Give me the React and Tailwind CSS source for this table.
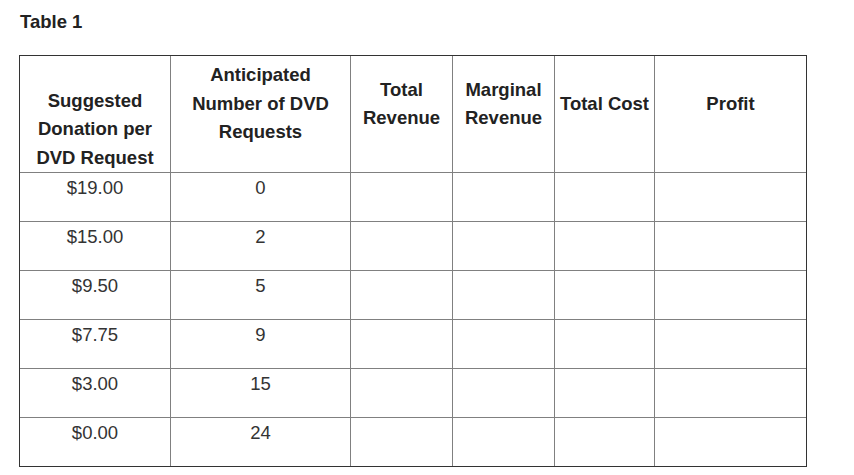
export default function App() {
  const rows = [
    ["$19.00", "0"],
    ["$15.00", "2"],
    ["$9.50", "5"],
    ["$7.75", "9"],
    ["$3.00", "15"],
    ["$0.00", "24"],
  ];
  const font = { fontFamily: '"Liberation Sans", Arial, sans-serif' };
  return (
    <div className="bg-white w-[854px] h-[475px] text-[#333] pl-[19px] pt-[8px]" style={font}>
      <div className="pl-[1px] text-[18.5px] font-bold leading-[28px] text-[#222]">Table 1</div>
      <div className="mt-[19px] w-[788px] border border-[#333] grid grid-cols-[151px_180px_102px_102px_100px_151px] text-[18.5px] leading-[28.5px]">
        <div className="h-[117px] border-r border-b border-[#808080] flex flex-col justify-end items-center text-center font-bold text-[#222] whitespace-nowrap">
          <span>Suggested</span>
          <span>Donation per</span>
          <span>DVD Request</span>
        </div>
        <div className="h-[117px] border-r border-b border-[#808080] flex flex-col justify-center items-center text-center font-bold text-[#222] pb-[20px] whitespace-nowrap">
          <span>Anticipated</span>
          <span>Number of DVD</span>
          <span>Requests</span>
        </div>
        <div className="h-[117px] border-r border-b border-[#808080] flex flex-col justify-center items-center text-center font-bold text-[#222] pb-[20px]">
          <span>Total</span>
          <span>Revenue</span>
        </div>
        <div className="h-[117px] border-r border-b border-[#808080] flex flex-col justify-center items-center text-center font-bold text-[#222] pb-[20px]">
          <span>Marginal</span>
          <span>Revenue</span>
        </div>
        <div className="h-[117px] border-r border-b border-[#808080] flex flex-col justify-center items-center text-center font-bold text-[#222] pb-[20px] whitespace-nowrap">
          <span>Total Cost</span>
        </div>
        <div className="h-[117px] border-b border-[#808080] flex flex-col justify-center items-center text-center font-bold text-[#222] pb-[20px]">
          <span>Profit</span>
        </div>
        {rows.map((r, i) => {
          const last = i === rows.length - 1;
          const b = last ? "h-[48px]" : "h-[49px] border-b";
          return [
            <div key={`a${i}`} className={`${b} border-r border-[#808080] text-center leading-[29px]`}>{r[0]}</div>,
            <div key={`b${i}`} className={`${b} border-r border-[#808080] text-center leading-[29px]`}>{r[1]}</div>,
            <div key={`c${i}`} className={`${b} border-r border-[#808080]`}></div>,
            <div key={`d${i}`} className={`${b} border-r border-[#808080]`}></div>,
            <div key={`e${i}`} className={`${b} border-r border-[#808080]`}></div>,
            <div key={`f${i}`} className={`${b} border-[#808080]`}></div>,
          ];
        })}
      </div>
    </div>
  );
}
